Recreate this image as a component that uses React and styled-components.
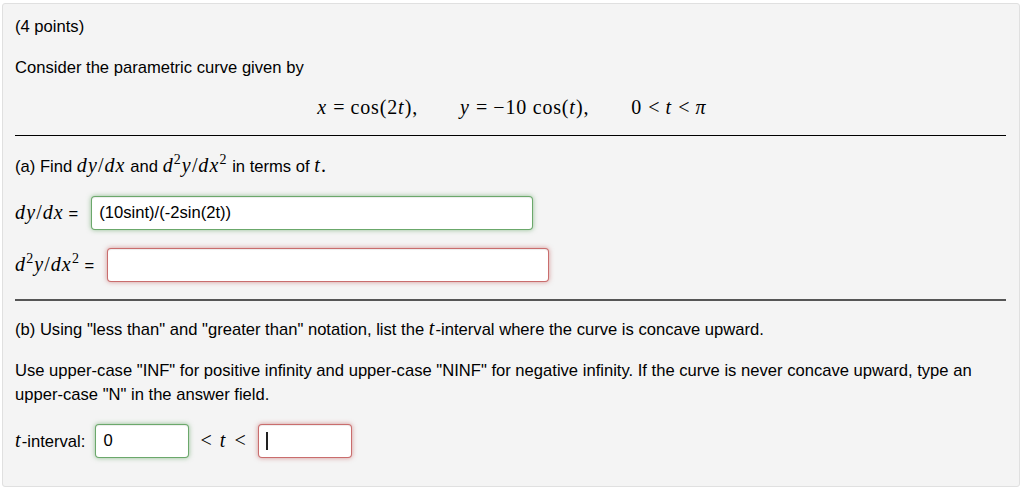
import React from "react";
import styled, { createGlobalStyle } from "styled-components";

const GlobalStyle = createGlobalStyle`
  html, body {
    margin: 0;
    padding: 0;
    background: #fff;
  }
  body {
    font-family: "Liberation Sans", Arial, sans-serif;
    font-size: 16.6px;
    color: #000;
  }
`;

const Page = styled.div`
  padding: 3px 4px 2px 2px;
`;

const Panel = styled.div`
  box-sizing: border-box;
  height: 484px;
  background: #f4f4f4;
  border: 1px solid #e0e0e0;
  border-radius: 3px;
  padding: 11px 12px 0 12px;
`;

const Para = styled.div`
  line-height: 24px;
  margin-top: ${(props) => props.marginTop || 0}px;
`;

const MathRow = styled.div`
  display: flex;
  justify-content: center;
  gap: 42px;
  height: 24px;
  align-items: center;
  margin-top: 16px;
  padding-left: 2px;
`;

const Eq = styled.span`
  white-space: nowrap;
`;

const Rule = styled.div`
  height: ${(props) => props.thickness || 1}px;
  background: ${(props) => props.color || "#000"};
  margin-top: ${(props) => props.marginTop || 0}px;
  margin-right: 1px;
`;

const MI = styled.i`
  font-family: "Liberation Serif", "DejaVu Serif", serif;
  font-style: italic;
  font-size: 20px;
  line-height: 1;
  letter-spacing: 1.2px;
`;

const MN = styled.span`
  font-family: "Liberation Serif", "DejaVu Serif", serif;
  font-size: 20px;
  line-height: 1;
  letter-spacing: 0.8px;
`;

const MOp = styled.span`
  font-family: "Liberation Serif", "DejaVu Serif", serif;
  font-size: 20px;
  line-height: 1;
  margin: 0 ${(props) => props.space ?? 6}px;
`;

const Sup = styled.span`
  font-family: "Liberation Serif", "DejaVu Serif", serif;
  font-size: 14px;
  line-height: 1;
  position: relative;
  top: -0.6em;
  margin-right: 1px;
`;

const AnswerRow = styled.div`
  display: flex;
  align-items: center;
  height: 34px;
  margin-top: ${(props) => props.marginTop || 0}px;
`;

const Label = styled.span`
  white-space: nowrap;
  margin-right: ${(props) => props.gap || 4}px;
`;

const AnswerBox = styled.div`
  box-sizing: border-box;
  width: ${(props) => props.width}px;
  height: 34px;
  display: flex;
  align-items: center;
  padding: 0 7px;
  background: #fff;
  border-radius: 4px;
  border: 1px solid
    ${(props) =>
      props.correct ? "rgba(81, 153, 81, 0.85)" : "rgba(191, 84, 84, 0.85)"};
  box-shadow: inset 0 1px 1px rgba(0, 0, 0, 0.075),
    0 0 5px
      ${(props) =>
        props.correct ? "rgba(81, 153, 81, 0.6)" : "rgba(191, 84, 84, 0.6)"};
  font-size: 16.6px;
`;

const Caret = styled.span`
  display: inline-block;
  width: 2px;
  height: 18px;
  background: #222;
`;

const Between = styled.span`
  margin: 0 12px 0 11px;
  white-space: nowrap;
`;

function DyDx() {
  return (
    <>
      <MI>dy</MI>
      <MN>/</MN>
      <MI>dx</MI>
    </>
  );
}

function D2yDx2() {
  return (
    <>
      <MI>d</MI>
      <Sup>2</Sup>
      <MI>y</MI>
      <MN>/</MN>
      <MI>dx</MI>
      <Sup>2</Sup>
    </>
  );
}

export default function App() {
  return (
    <Page>
      <GlobalStyle />
      <Panel>
        <Para>(4 points)</Para>
        <Para marginTop={17}>Consider the parametric curve given by</Para>

        <MathRow>
          <Eq>
            <MI>x</MI>
            <MOp>=</MOp>
            <MN>cos(2</MN>
            <MI>t</MI>
            <MN>),</MN>
          </Eq>
          <Eq>
            <MI>y</MI>
            <MOp>=</MOp>
            <MN>−10 cos(</MN>
            <MI>t</MI>
            <MN>),</MN>
          </Eq>
          <Eq>
            <MN>0</MN>
            <MOp>&lt;</MOp>
            <MI>t</MI>
            <MOp>&lt;</MOp>
            <MI>π</MI>
          </Eq>
        </MathRow>

        <Rule marginTop={15} />

        <Para marginTop={19}>
          (a) Find <DyDx /> and <D2yDx2 /> in terms of <MI>t</MI>
          <MN>.</MN>
        </Para>

        <AnswerRow marginTop={17}>
          <Label gap={13}>
            <DyDx /> =
          </Label>
          <AnswerBox width={442} correct>
            (10sint)/(-2sin(2t))
          </AnswerBox>
        </AnswerRow>

        <AnswerRow marginTop={18}>
          <Label gap={13}>
            <D2yDx2 /> =
          </Label>
          <AnswerBox width={442} />
        </AnswerRow>

        <Rule marginTop={17} thickness={2} color="#555" />

        <Para marginTop={17}>
          (b) Using "less than" and "greater than" notation, list the{" "}
          <MI>t</MI>-interval where the curve is concave upward.
        </Para>

        <Para marginTop={17}>
          Use upper-case "INF" for positive infinity and upper-case "NINF" for
          negative infinity. If the curve is never concave upward, type an
          <br />
          upper-case "N" in the answer field.
        </Para>

        <AnswerRow marginTop={17}>
          <Label gap={10}>
            <MI>t</MI>-interval:
          </Label>
          <AnswerBox width={94} correct>
            0
          </AnswerBox>
          <Between>
            <MOp space={0}>&lt;</MOp>
            <MOp space={8}>
              <MI>t</MI>
            </MOp>
            <MOp space={0}>&lt;</MOp>
          </Between>
          <AnswerBox width={94}>
            <Caret />
          </AnswerBox>
        </AnswerRow>
      </Panel>
    </Page>
  );
}
